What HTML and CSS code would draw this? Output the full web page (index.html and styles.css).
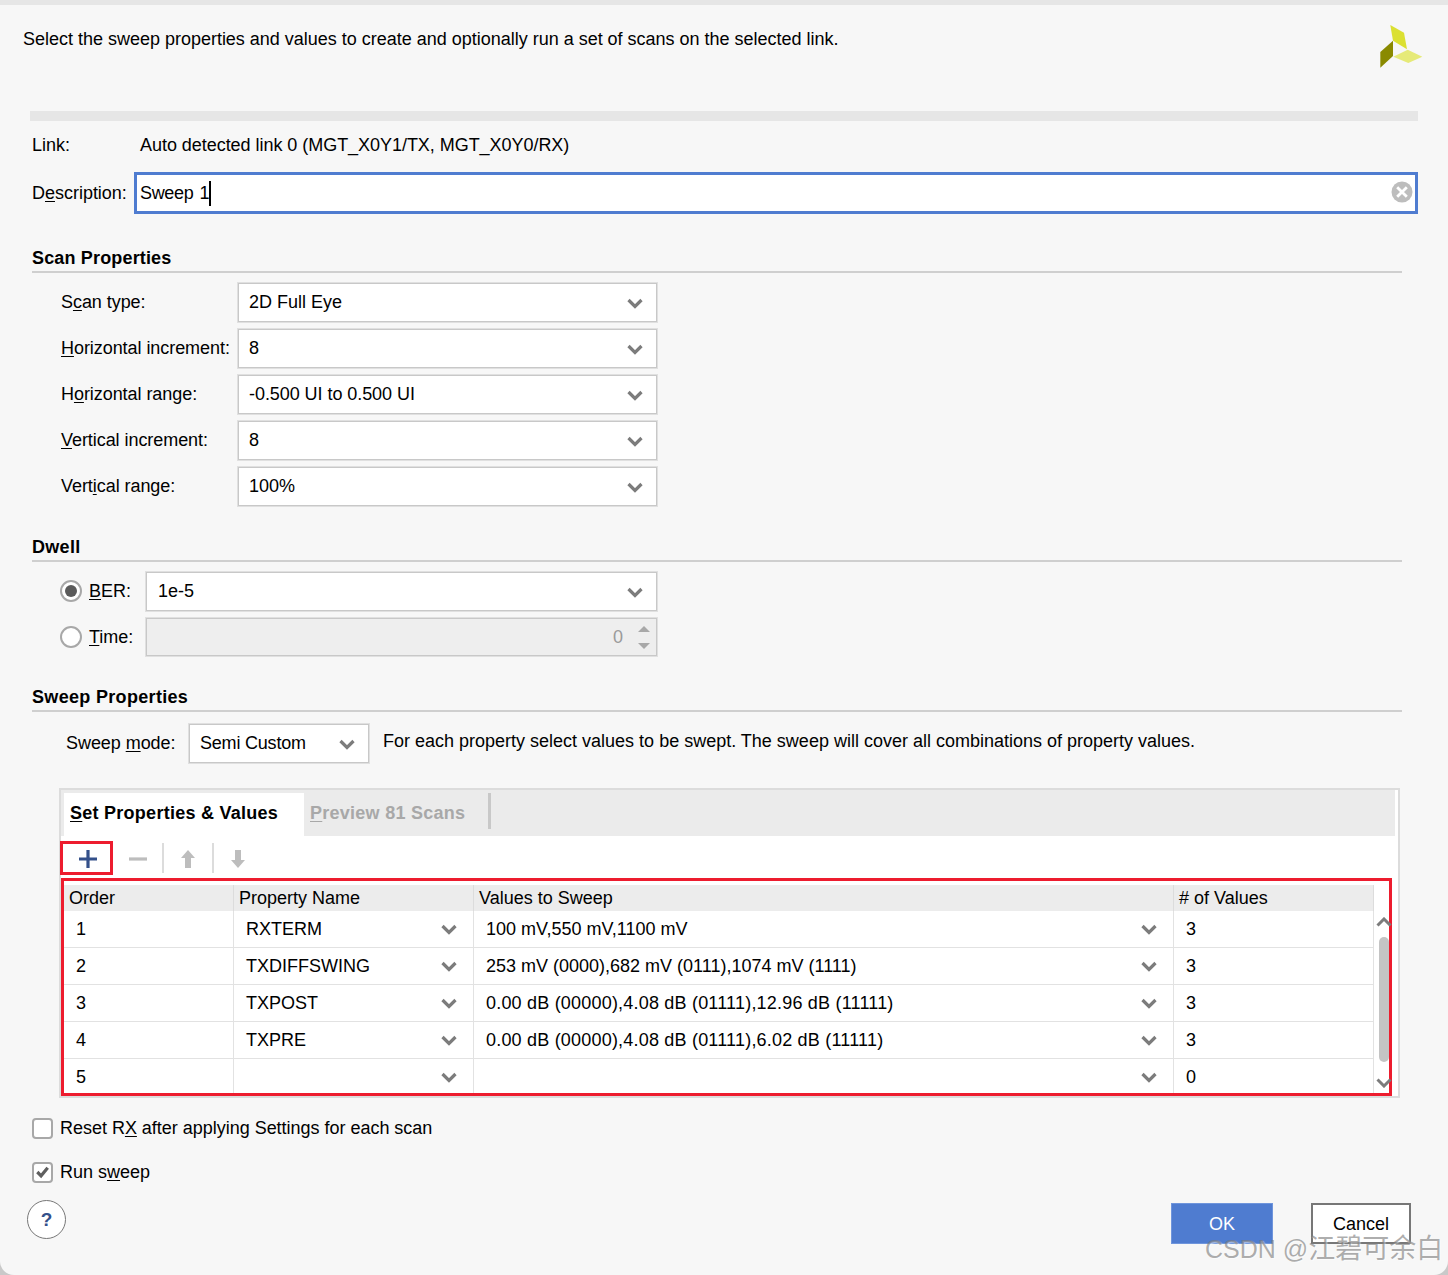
FILE: index.html
```html
<!DOCTYPE html>
<html lang="en">
<head>
<meta charset="utf-8">
<title>Create Scan Sweep</title>
<link rel="stylesheet" href="styles.css">
</head>
<body>
<svg width="0" height="0" class="defs"><defs><symbol id="chev" viewBox="0 0 16 11"><path d="M1.5 2 8 8.5 14.5 2" fill="none" stroke="#7c7c7c" stroke-width="3.2"/></symbol></defs></svg>
<main class="dialog">
  <div class="strip"></div>
  <header class="banner">
    <p class="intro">Select the sweep properties and values to create and optionally run a set of scans on the selected link.</p>
    <svg class="logo" width="43" height="43" viewBox="0 0 43 43"><polygon points="10.3,0 24,7.7 27,24.3 13,15.7" fill="#dbe032"/><polygon points="13.3,31.7 27.7,24.7 42.3,31.7 28.3,38" fill="#e6ea78"/><polygon points="13,15.7 13,31 0.3,42.7 0.3,27" fill="#8a8a00"/></svg>
  </header>
  <div class="graybar"></div>
  <div class="link-row"><span class="link-label">Link:</span><span class="link-value">Auto detected link 0 (MGT_X0Y1/TX, MGT_X0Y0/RX)</span></div>
  <div class="desc-row">
    <label class="desc-label">D<u>e</u>scription:</label>
    <div class="desc-input"><span class="desc-text">Sweep 1</span><i class="caret"></i>
      <svg class="clear" width="22" height="22" viewBox="0 0 22 22"><circle cx="11" cy="11" r="10.5" fill="#bdbdbd"/><path d="M6.2 6.2l9.6 9.6M15.8 6.2l-9.6 9.6" stroke="#fff" stroke-width="2.8"/></svg>
    </div>
  </div>

  <h2 class="section first">Scan Properties</h2>
  <div class="form">
    <div class="frow"><span class="flabel">S<u>c</u>an type:</span><div class="select wide"><span>2D Full Eye</span><svg class="chev"><use href="#chev"/></svg></div></div>
    <div class="frow"><span class="flabel"><u>H</u>orizontal increment:</span><div class="select wide"><span>8</span><svg class="chev"><use href="#chev"/></svg></div></div>
    <div class="frow"><span class="flabel">H<u>o</u>rizontal range:</span><div class="select wide"><span class="tight">-0.500 UI to 0.500 UI</span><svg class="chev"><use href="#chev"/></svg></div></div>
    <div class="frow"><span class="flabel"><u>V</u>ertical increment:</span><div class="select wide"><span>8</span><svg class="chev"><use href="#chev"/></svg></div></div>
    <div class="frow"><span class="flabel">Vert<u>i</u>cal range:</span><div class="select wide"><span>100%</span><svg class="chev"><use href="#chev"/></svg></div></div>
  </div>

  <h2 class="section dwell">Dwell</h2>
  <div class="dwell-body">
    <div class="drow"><span class="radio on"></span><span class="dlabel"><u>B</u>ER:</span><div class="select dsel"><span>1e-5</span><svg class="chev"><use href="#chev"/></svg></div></div>
    <div class="drow timerow"><span class="radio"></span><span class="dlabel"><u>T</u>ime:</span><div class="spin"><span class="spinval">0</span><span class="arrows"><i class="up"></i><i class="down"></i></span></div></div>
  </div>

  <h2 class="section sweep">Sweep Properties</h2>
  <div class="mode-row">
    <span class="mlabel">Sweep <u>m</u>ode:</span>
    <div class="select msel"><span class="tight2">Semi Custom</span><svg class="chev"><use href="#chev"/></svg></div>
    <span class="mnote">For each property select values to be swept. The sweep will cover all combinations of property values.</span>
  </div>

  <section class="panel">
    <div class="tabs">
      <div class="tab active"><u>S</u>et Properties &amp; Values</div>
      <div class="tab dim"><u>P</u>review 81 Scans</div>
    </div>
    <div class="toolbar">
      <button class="tool add"><svg width="20" height="20" viewBox="0 0 20 20"><path d="M10 1v18M1 10h18" stroke="#34508a" stroke-width="3.2"/></svg></button>
      <span class="tool minus"><svg width="20" height="20" viewBox="0 0 20 20"><path d="M1 10h18" stroke="#bdbdbd" stroke-width="3.2"/></svg></span>
      <i class="tsep"></i>
      <span class="tool narrow"><svg width="16" height="20" viewBox="0 0 16 20"><path d="M8 1 15 9H11V19H5V9H1Z" fill="#bdbdbd"/></svg></span>
      <i class="tsep"></i>
      <span class="tool narrow"><svg width="16" height="20" viewBox="0 0 16 20"><path d="M8 19 15 11H11V1H5V11H1Z" fill="#bdbdbd"/></svg></span>
    </div>
    <div class="tablewrap">
      <div class="tablemain">
        <div class="thead"><div class="c1">Order</div><div class="c2">Property Name</div><div class="c3">Values to Sweep</div><div class="c4"># of Values</div></div>
        <div class="trow"><div class="c1">1</div><div class="c2"><span>RXTERM</span><svg class="chev"><use href="#chev"/></svg></div><div class="c3"><span>100 mV,550 mV,1100 mV</span><svg class="chev"><use href="#chev"/></svg></div><div class="c4">3</div></div>
        <div class="trow"><div class="c1">2</div><div class="c2"><span>TXDIFFSWING</span><svg class="chev"><use href="#chev"/></svg></div><div class="c3"><span>253 mV (0000),682 mV (0111),1074 mV (1111)</span><svg class="chev"><use href="#chev"/></svg></div><div class="c4">3</div></div>
        <div class="trow"><div class="c1">3</div><div class="c2"><span>TXPOST</span><svg class="chev"><use href="#chev"/></svg></div><div class="c3"><span class="digits">0.00 dB (00000),4.08 dB (01111),12.96 dB (11111)</span><svg class="chev"><use href="#chev"/></svg></div><div class="c4">3</div></div>
        <div class="trow"><div class="c1">4</div><div class="c2"><span>TXPRE</span><svg class="chev"><use href="#chev"/></svg></div><div class="c3"><span class="digits">0.00 dB (00000),4.08 dB (01111),6.02 dB (11111)</span><svg class="chev"><use href="#chev"/></svg></div><div class="c4">3</div></div>
        <div class="trow last"><div class="c1">5</div><div class="c2"><span></span><svg class="chev"><use href="#chev"/></svg></div><div class="c3"><span></span><svg class="chev"><use href="#chev"/></svg></div><div class="c4">0</div></div>
      </div>
      <div class="scrollbar">
        <svg class="sarrow" width="16" height="10" viewBox="0 0 16 10"><path d="M1.5 8.5 8 2 14.5 8.5" fill="none" stroke="#7c7c7c" stroke-width="3"/></svg>
        <div class="thumb"></div>
        <svg class="sarrow" width="16" height="10" viewBox="0 0 16 10"><path d="M1.5 1.5 8 8 14.5 1.5" fill="none" stroke="#7c7c7c" stroke-width="3"/></svg>
      </div>
    </div>
  </section>

  <div class="check-row one"><span class="check"></span><span class="tight3">Reset R<u>X</u> after applying Settings for each scan</span></div>
  <div class="check-row two"><span class="check"><svg width="18" height="18" viewBox="0 0 18 18"><path d="M3.5 9 7.5 13 14.5 4.5" fill="none" stroke="#5f5f5f" stroke-width="3.4"/></svg></span><span>Run s<u>w</u>eep</span></div>

  <footer class="footer">
    <button class="help">?</button>
    <button class="btn ok">OK</button>
    <button class="btn cancel">Cancel</button>
  </footer>
  <div class="watermark">CSDN @<span class="wm-cjk">江碧可余白</span></div>
</main>
</body>
</html>
```
FILE: styles.css
```css
* { box-sizing: border-box; }
html, body { margin: 0; padding: 0; }
body { background: #c9c9c9; font-family: "Liberation Sans", Arial, sans-serif; font-size: 18px; color: #000; }
.defs { position: absolute; }
u { text-underline-offset: 2px; text-decoration-thickness: 1px; }
.tight { letter-spacing: -.06px; }
.tight2 { letter-spacing: -.2px; }
.tight3 { letter-spacing: -.02px; }
.digits { letter-spacing: .2px; }
.dialog { position: relative; width: 1448px; height: 1275px; background: #f7f7f7; border-radius: 0 0 14px 14px; overflow: hidden; }
.strip { height: 5px; background: #e6e6e6; }
.banner { height: 106px; display: flex; justify-content: space-between; padding: 0 25px 0 23px; }
.intro { margin: 23px 0 0; line-height: 22px; letter-spacing: -.01px; }
.logo { margin-top: 20px; }
.graybar { height: 10px; margin: 0 30px; background: #e6e6e6; }
.link-row { display: flex; height: 22px; margin: 13px 0 0 32px; line-height: 22px; }
.link-label { width: 108px; }
.link-value { letter-spacing: -.04px; }
.desc-row { display: flex; align-items: center; height: 42px; margin: 16px 30px 0 32px; }
.desc-label { width: 102px; padding-top: 1px; letter-spacing: -.02px; }
.desc-input { flex: 1; height: 42px; display: flex; align-items: center; position: relative; background: #fff; border: 3px solid #4f7cd0; padding-left: 3px; }
.desc-text { letter-spacing: -.35px; word-spacing: 1.5px; }
.caret { width: 2px; height: 25px; background: #000; margin-left: 0; }
.clear { position: absolute; right: 2px; top: 6px; }
.section { margin: 0 46px 0 32px; height: 26px; font-size: 18px; font-weight: bold; line-height: 22px; letter-spacing: .16px; border-bottom: 2px solid #cfcfcf; }
.section.first { margin-top: 33px; }
.section.dwell { margin-top: 30px; letter-spacing: .3px; }
.section.sweep { margin-top: 30px; letter-spacing: .32px; }
.form { margin: 10px 0 0 61px; display: flex; flex-direction: column; gap: 7px; }
.frow { display: flex; align-items: center; height: 39px; }
.flabel { width: 177px; letter-spacing: -.06px; }
.select { display: flex; align-items: center; justify-content: space-between; height: 39px; background: #fff; border: 1px solid #c8c8c8; box-shadow: 0 0 0 1px #e0e0e0; padding: 0 13px 0 10px; }
.wide { width: 419px; }
.chev { width: 16px; height: 11px; flex: none; margin-top: 2px; }
.dwell-body { margin: 10px 0 0 60px; display: flex; flex-direction: column; gap: 7px; }
.drow { display: flex; align-items: center; height: 39px; }
.drow.timerow { height: 38px; }
.radio { width: 22px; height: 22px; border-radius: 50%; background: #fff; border: 2px solid #a8a8a8; display: flex; align-items: center; justify-content: center; }
.radio.on { margin-top: -1px; }
.radio.on::after { content: ""; width: 12px; height: 12px; border-radius: 50%; background: #5a5a5a; }
.dlabel { width: 57px; margin-left: 7px; }
.dsel { width: 511px; padding-left: 11px; }
.spin { width: 511px; height: 38px; display: flex; align-items: center; justify-content: flex-end; background: #eee; border: 1px solid #c8c8c8; box-shadow: 0 0 0 1px #e0e0e0; padding-right: 6px; }
.spinval { color: #9a9a9a; margin-right: 15px; }
.arrows { display: flex; flex-direction: column; gap: 11px; }
.arrows i { width: 0; height: 0; border-left: 6px solid transparent; border-right: 6px solid transparent; }
.arrows .up { border-bottom: 6px solid #a8a8a8; }
.arrows .down { border-top: 6px solid #a8a8a8; }
.mode-row { display: flex; align-items: flex-start; height: 39px; margin: 12px 0 0 66px; }
.mlabel { width: 123px; line-height: 39px; letter-spacing: -.06px; }
.msel { width: 180px; padding-left: 10px; }
.mnote { margin: 6px 0 0 14px; line-height: 22px; }
.panel { margin: 25px 48px 0 59px; height: 310px; border: 2px solid #dcdcdc; background: #fff; display: flex; flex-direction: column; }
.tabs { display: flex; height: 46px; background: #ebebeb; padding: 3px 0 0 3px; margin-right: 3px; }
.tab { font-size: 18px; font-weight: bold; letter-spacing: .26px; }
.tab.active { width: 240px; height: 43px; background: #fff; padding-left: 6px; line-height: 40px; }
.tab.dim { width: 187px; color: #a8a8a8; padding-left: 6px; height: 36px; border-right: 3px solid #c8c8c8; line-height: 40px; }
.toolbar { display: flex; align-items: flex-start; height: 43px; padding-top: 5px; }
.tool { display: flex; align-items: center; justify-content: center; width: 50px; height: 34px; border: 0; padding: 2px 0 0; background: none; }
.tool.minus { width: 49px; }
.tool.narrow { width: 48px; }
.tool.add { width: 53px; height: 34px; border: 3px solid #ed1c2e; margin-left: -1px; padding: 2px 0 0 2px; }
.tsep { width: 2px; height: 30px; margin-top: 2px; background: #dcdcdc; }
.tablewrap { display: flex; width: 1331px; height: 218px; border: 3px solid #ed1c2e; background: #fff; margin-top: -1px; position: relative; }
.tablemain { width: 1310px; padding-top: 4px; }
.thead, .trow { display: grid; grid-template-columns: 170px 240px 700px 200px; }
.thead { height: 26px; background: #ececec; line-height: 27px; }
.thead > div { padding-left: 5px; border-right: 1px solid #dcdcdc; }
.trow { height: 37px; border-bottom: 1px solid #e2e2e2; }
.trow.last { height: 34px; border-bottom: 0; }
.trow > div { display: flex; align-items: center; justify-content: space-between; border-right: 1px solid #e2e2e2; padding-top: 1px; }
.trow.last > div { padding-top: 3px; }
.trow .chev { margin-top: 0; }
.trow .c1 { padding-left: 12px; }
.trow .c4 { padding-left: 12px; }
.trow .c2, .trow .c3 { padding-left: 12px; padding-right: 16px; }
.scrollbar { flex: none; width: 18px; display: flex; flex-direction: column; align-items: center; padding: 36px 0 0 2px; margin-right: -3px; position: relative; z-index: 1; }
.sarrow { flex: none; }
.thumb { width: 10px; height: 125px; margin: 10px 0 16px; background: #c4c4c4; border-radius: 5px; }
.check-row { display: flex; align-items: center; height: 22px; margin-left: 32px; gap: 7px; }
.check-row.one { margin-top: 19px; }
.check-row.two { margin-top: 22px; }
.check { width: 21px; height: 21px; border: 2px solid #a8a8a8; border-radius: 4px; background: #fff; display: flex; align-items: center; justify-content: center; }
.footer { display: flex; align-items: flex-start; padding: 0 37px 0 27px; margin-top: 9px; }
.help { width: 39px; height: 39px; border-radius: 50%; border: 1px solid #777; background: #fff; color: #34508a; font: bold 19px "Liberation Sans", Arial, sans-serif; padding: 0; margin-top: 8px; }
.btn { height: 41px; font: 18px "Liberation Sans", Arial, sans-serif; padding: 2px 0 0; margin-top: 11px; }
.ok { width: 102px; margin-left: auto; background: #4f7cd0; color: #fff; border: 1px solid #6f95dc; }
.cancel { width: 100px; margin-left: 38px; background: #fff; color: #000; border: 2px solid #777; }
.watermark { position: absolute; left: 1205px; top: 1233px; font-size: 25px; line-height: 32px; color: rgba(120,120,120,.6); text-shadow: 1px 1px 1px rgba(255,255,255,.5); font-family: "Liberation Sans", "Noto Sans CJK SC", sans-serif; white-space: nowrap; }
.wm-cjk { font-size: 27px; }
```
